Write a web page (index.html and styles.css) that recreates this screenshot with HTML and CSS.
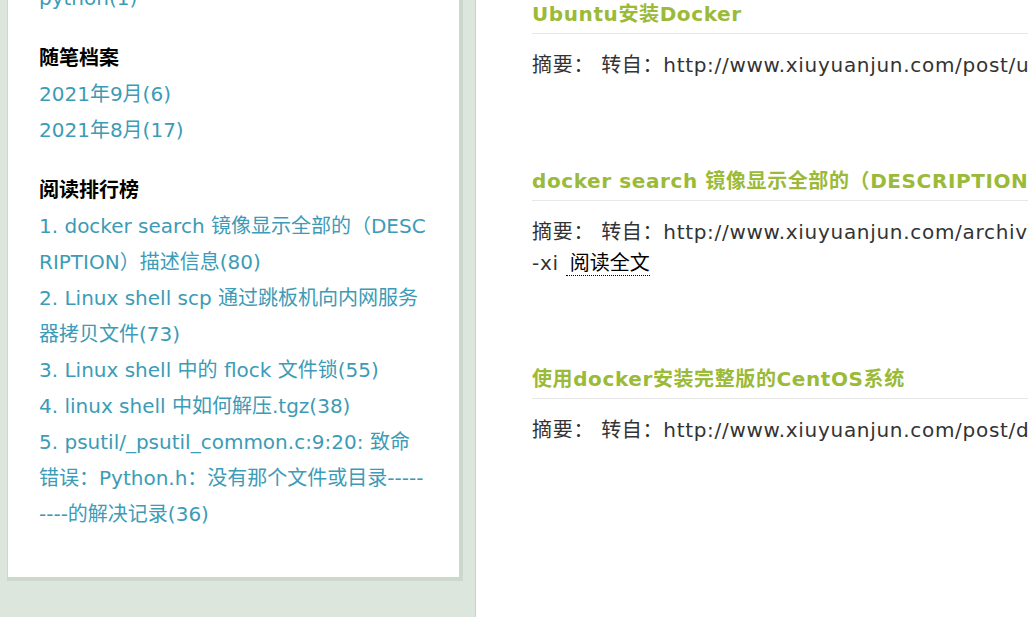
FILE: index.html
```html
<!DOCTYPE html>
<html lang="zh-CN">
<head>
<meta charset="utf-8">
<title>博客</title>
<link rel="stylesheet" href="styles.css">
</head>
<body>
<aside class="sidebar">
  <div class="panel">
    <ul class="list">
      <li><a href="#">python(1)</a></li>
    </ul>
    <section class="block">
      <h3 class="block-title">随笔档案</h3>
      <ul class="list">
        <li><a href="#">2021年9月(6)</a></li>
        <li><a href="#">2021年8月(17)</a></li>
      </ul>
    </section>
    <section class="block">
      <h3 class="block-title">阅读排行榜</h3>
      <ol class="list rank">
        <li><a href="#">1. docker search 镜像显示全部的（DESCRIPTION）描述信息(80)</a></li>
        <li><a href="#">2. Linux shell scp 通过跳板机向内网服务器拷贝文件(73)</a></li>
        <li><a href="#">3. Linux shell 中的 flock 文件锁(55)</a></li>
        <li><a href="#">4. linux shell 中如何解压.tgz(38)</a></li>
        <li><a href="#">5. psutil/_psutil_common.c:9:20: 致命错误：Python.h：没有那个文件或目录---------的解决记录(36)</a></li>
      </ol>
    </section>
  </div>
</aside>
<main class="main">
  <article class="post">
    <h2 class="post-title"><a href="#">Ubuntu安装Docker</a></h2>
    <p class="post-abs"><span class="line">摘要： 转自：http://www.xiuyuanjun.com/post/ubuntu-install-docker.html Ubuntu 安装 Docker</span></p>
  </article>
  <article class="post">
    <h2 class="post-title"><a href="#">docker search 镜像显示全部的（DESCRIPTION）描述信息</a></h2>
    <p class="post-abs"><span class="line">摘要： 转自：http://www.xiuyuanjun.com/archives/docker-search-no-trunc.html docker search --no-trunc | grep</span><span class="line">-xi <a class="more" href="#">阅读全文</a></span></p>
  </article>
  <article class="post">
    <h2 class="post-title"><a href="#">使用docker安装完整版的CentOS系统</a></h2>
    <p class="post-abs"><span class="line">摘要： 转自：http://www.xiuyuanjun.com/post/docker-centos-full.html 使用 docker 安装完整版的 CentOS 系统</span></p>
  </article>
</main>
</body>
</html>
```

FILE: styles.css
```css
html, body {
  margin: 0;
  padding: 0;
  height: 100%;
}
body {
  display: flex;
  align-items: stretch;
  overflow: hidden;
  background: #ffffff;
  font-family: "DejaVu Sans", Verdana, "Noto Sans CJK SC", sans-serif;
  font-size: 20px;
}
.sidebar {
  width: 468px;
  flex: none;
  padding-left: 7px;
  background: #dce6dc;
  border-right: 1px solid #c9d2c9;
}
.panel {
  width: 389px;
  margin-top: -20px;
  padding: 0 31px 45px 31px;
  background: #ffffff;
  border: 1px solid #cdd8cd;
  border-top: 0;
  border-right-width: 4px;
  border-bottom-width: 4px;
}
.list {
  list-style: none;
  margin: 0;
  padding: 0;
}
.list li {
  line-height: 36px;
  word-break: break-all;
}
.list a {
  color: #3c9bb6;
  text-decoration: none;
}
.block {
  margin-top: 24px;
}
.block-title {
  margin: 0;
  font-size: 20px;
  font-weight: bold;
  line-height: 36px;
  color: #000000;
}
.main {
  flex: 1;
  min-width: 0;
  overflow: hidden;
  padding-left: 56px;
  background: #ffffff;
}
.post {
  width: 1200px;
  margin-bottom: 85px;
}
.post:first-child {
  margin-top: -1px;
}
.post-title {
  margin: 0;
  padding-bottom: 4px;
  font-size: 20px;
  font-weight: bold;
  line-height: 30px;
  letter-spacing: 0.6px;
  white-space: nowrap;
  border-bottom: 1px solid #e8e8e8;
}
.post-title a {
  color: #9aba38;
  text-decoration: none;
}
.post-abs {
  margin: 16px 0 0;
  color: #333333;
  line-height: 31px;
  letter-spacing: 0.7px;
}
.line {
  display: block;
  white-space: nowrap;
}
.more {
  color: #000000;
  text-decoration: none;
  padding-left: 4px;
  letter-spacing: 0;
  border-bottom: 1px dotted #000000;
}
```
